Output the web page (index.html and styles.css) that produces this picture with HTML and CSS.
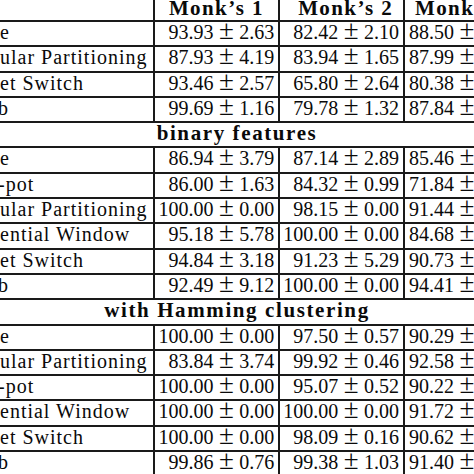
FILE: index.html
```html
<!DOCTYPE html>
<html>
<head>
<meta charset="utf-8">
<link rel="stylesheet" href="styles.css">
</head>
<body>
<div class="table">
  <div class="row head">
    <div class="c c1"></div>
    <div class="c c2 h">Monk’s 1</div>
    <div class="c c3 h">Monk’s 2</div>
    <div class="c c4 h">Monk</div>
  </div>

  <div class="row"><div class="c c1">e</div><div class="c c2">93.93 <span class="pm">±</span> 2.63</div><div class="c c3">82.42 <span class="pm">±</span> 2.10</div><div class="c c4">88.50 <span class="pm">±</span></div></div>
  <div class="row"><div class="c c1">ular Partitioning</div><div class="c c2">87.93 <span class="pm">±</span> 4.19</div><div class="c c3">83.94 <span class="pm">±</span> 1.65</div><div class="c c4">87.99 <span class="pm">±</span></div></div>
  <div class="row"><div class="c c1">et Switch</div><div class="c c2">93.46 <span class="pm">±</span> 2.57</div><div class="c c3">65.80 <span class="pm">±</span> 2.64</div><div class="c c4">80.38 <span class="pm">±</span></div></div>
  <div class="row"><div class="c c1 cut">b</div><div class="c c2">99.69 <span class="pm">±</span> 1.16</div><div class="c c3">79.78 <span class="pm">±</span> 1.32</div><div class="c c4">87.84 <span class="pm">±</span></div></div>

  <div class="row section"><span>binary features</span></div>

  <div class="row"><div class="c c1">e</div><div class="c c2">86.94 <span class="pm">±</span> 3.79</div><div class="c c3">87.14 <span class="pm">±</span> 2.89</div><div class="c c4">85.46 <span class="pm">±</span></div></div>
  <div class="row"><div class="c c1 cut">-pot</div><div class="c c2">86.00 <span class="pm">±</span> 1.63</div><div class="c c3">84.32 <span class="pm">±</span> 0.99</div><div class="c c4">71.84 <span class="pm">±</span></div></div>
  <div class="row"><div class="c c1">ular Partitioning</div><div class="c c2">100.00 <span class="pm">±</span> 0.00</div><div class="c c3">98.15 <span class="pm">±</span> 0.00</div><div class="c c4">91.44 <span class="pm">±</span></div></div>
  <div class="row"><div class="c c1">ential Window</div><div class="c c2">95.18 <span class="pm">±</span> 5.78</div><div class="c c3">100.00 <span class="pm">±</span> 0.00</div><div class="c c4">84.68 <span class="pm">±</span></div></div>
  <div class="row"><div class="c c1">et Switch</div><div class="c c2">94.84 <span class="pm">±</span> 3.18</div><div class="c c3">91.23 <span class="pm">±</span> 5.29</div><div class="c c4">90.73 <span class="pm">±</span></div></div>
  <div class="row"><div class="c c1 cut">b</div><div class="c c2">92.49 <span class="pm">±</span> 9.12</div><div class="c c3">100.00 <span class="pm">±</span> 0.00</div><div class="c c4">94.41 <span class="pm">±</span></div></div>

  <div class="row section"><span>with Hamming clustering</span></div>

  <div class="row"><div class="c c1">e</div><div class="c c2">100.00 <span class="pm">±</span> 0.00</div><div class="c c3">97.50 <span class="pm">±</span> 0.57</div><div class="c c4">90.29 <span class="pm">±</span></div></div>
  <div class="row"><div class="c c1">ular Partitioning</div><div class="c c2">83.84 <span class="pm">±</span> 3.74</div><div class="c c3">99.92 <span class="pm">±</span> 0.46</div><div class="c c4">92.58 <span class="pm">±</span></div></div>
  <div class="row"><div class="c c1 cut">-pot</div><div class="c c2">100.00 <span class="pm">±</span> 0.00</div><div class="c c3">95.07 <span class="pm">±</span> 0.52</div><div class="c c4">90.22 <span class="pm">±</span></div></div>
  <div class="row"><div class="c c1">ential Window</div><div class="c c2">100.00 <span class="pm">±</span> 0.00</div><div class="c c3">100.00 <span class="pm">±</span> 0.00</div><div class="c c4">91.72 <span class="pm">±</span></div></div>
  <div class="row"><div class="c c1">et Switch</div><div class="c c2">100.00 <span class="pm">±</span> 0.00</div><div class="c c3">98.09 <span class="pm">±</span> 0.16</div><div class="c c4">90.62 <span class="pm">±</span></div></div>
  <div class="row"><div class="c c1 cut">b</div><div class="c c2">99.86 <span class="pm">±</span> 0.76</div><div class="c c3">99.38 <span class="pm">±</span> 1.03</div><div class="c c4">91.40 <span class="pm">±</span></div></div>
</div>
</body>
</html>
```

FILE: styles.css
```css
html, body {
  margin: 0;
  padding: 0;
  background: #ffffff;
  overflow: hidden;
}

body {
  width: 474px;
  height: 474px;
  font-family: "Liberation Serif", "Times New Roman", serif;
  font-size: 20px;
  color: #0a0a0a;
}

.table {
  display: flex;
  flex-direction: column;
  width: 474px;
}

.row {
  display: grid;
  grid-template-columns: 154.5px 125.8px 124.7px 1fr;
  height: 25.3px;
  box-sizing: border-box;
  border-bottom: 2px solid #1a1a1a;
  flex: none;
}

.row.head {
  height: 22px;
}

.c {
  line-height: 21px;
  white-space: nowrap;
  overflow: hidden;
}

.c1, .c2, .c3 {
  border-right: 2px solid #1a1a1a;
}

.c1 {
  letter-spacing: 1px;
  padding-left: 0;
}

.c1.cut {
  text-indent: -2px;
}

.c2, .c3 {
  text-align: right;
  padding-right: 4px;
}

.c4 {
  padding-left: 4px;
}

.pm {
  font-size: 27px;
  line-height: 1px;
  margin: 0 0.5px;
}

.h {
  font-weight: bold;
  font-size: 21px;
  letter-spacing: 1.4px;
  line-height: 16px;
  text-align: center;
  padding: 0;
}

.h.c3 {
  padding-left: 8px;
}

.h.c4 {
  text-align: left;
  padding-left: 10px;
}

.row.section {
  display: flex;
  justify-content: center;
  align-items: flex-start;
}

.row.section span {
  font-weight: bold;
  font-size: 21px;
  letter-spacing: 1.6px;
  line-height: 21px;
  white-space: nowrap;
}
```
